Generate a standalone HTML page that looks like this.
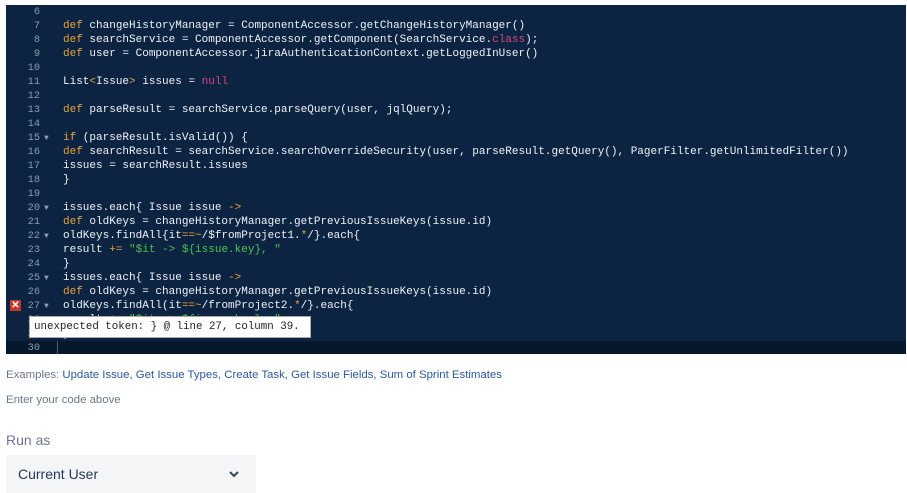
<!DOCTYPE html>
<html><head><meta charset="utf-8"><style>
body{margin:0;width:907px;height:493px;background:#fff;font-family:"Liberation Sans",sans-serif;overflow:hidden;position:relative}
.ed{position:absolute;left:6px;top:5px;width:900px;height:349px;background:#0c2441;font-family:"Liberation Mono",monospace;font-size:11px;color:#eef2f7}
.ln{position:absolute;left:0;height:14px;line-height:14px;width:900px;white-space:pre}
.g{display:inline-block;width:34px;text-align:right;color:#8b9bb0;padding-right:23px;font-size:10.3px}
.k{color:#e8a23a}.n{color:#d64783}.s{color:#4cc24c}.o{color:#e8a23a}
.ar{position:absolute;color:#8b9bb0;font-size:8px}
.act{position:absolute;left:0;top:336px;width:900px;height:13px;background:#06182c}
.tip{position:absolute;left:29px;top:316px;width:282px;height:22px;background:#fff;border:1px solid #aaa;font-family:"Liberation Mono",monospace;font-size:10.8px;line-height:21px;color:#222;padding-left:4px;box-sizing:border-box}
.x{position:absolute;left:4px;top:295px;width:11px;height:11px;background:#c0392b;color:#fff;font-size:10px;line-height:11px;text-align:center;font-family:"Liberation Sans";font-weight:bold}
</style></head><body>
<div class="ed">
<div class="act"></div>
<div class="ln" style="top:0"><span class="g">6</span></div>
<div class="ln" style="top:14px"><span class="g">7</span><span class="k">def</span> changeHistoryManager = ComponentAccessor.getChangeHistoryManager()</div>
<div class="ln" style="top:28px"><span class="g">8</span><span class="k">def</span> searchService = ComponentAccessor.getComponent(SearchService.<span class="n">class</span>);</div>
<div class="ln" style="top:42px"><span class="g">9</span><span class="k">def</span> user = ComponentAccessor.jiraAuthenticationContext.getLoggedInUser()</div>
<div class="ln" style="top:56px"><span class="g">10</span></div>
<div class="ln" style="top:70px"><span class="g">11</span>List<span class="o">&lt;</span>Issue<span class="o">&gt;</span> issues = <span class="n">null</span></div>
<div class="ln" style="top:84px"><span class="g">12</span></div>
<div class="ln" style="top:98px"><span class="g">13</span><span class="k">def</span> parseResult = searchService.parseQuery(user, jqlQuery);</div>
<div class="ln" style="top:112px"><span class="g">14</span></div>
<div class="ln" style="top:126px"><span class="g">15</span><span class="k">if</span> (parseResult.isValid()) {</div>
<div class="ln" style="top:140px"><span class="g">16</span><span class="k">def</span> searchResult = searchService.searchOverrideSecurity(user, parseResult.getQuery(), PagerFilter.getUnlimitedFilter())</div>
<div class="ln" style="top:154px"><span class="g">17</span>issues = searchResult.issues</div>
<div class="ln" style="top:168px"><span class="g">18</span>}</div>
<div class="ln" style="top:182px"><span class="g">19</span></div>
<div class="ln" style="top:196px"><span class="g">20</span>issues.each{ Issue issue <span class="o">-&gt;</span></div>
<div class="ln" style="top:210px"><span class="g">21</span><span class="k">def</span> oldKeys = changeHistoryManager.getPreviousIssueKeys(issue.id)</div>
<div class="ln" style="top:224px"><span class="g">22</span>oldKeys.findAll{it<span class="o">==~</span>/$fromProject1.<span class="o">*</span>/}.each{</div>
<div class="ln" style="top:238px"><span class="g">23</span>result <span class="o">+=</span> <span class="s">"$it -&gt; ${issue.key}, "</span></div>
<div class="ln" style="top:252px"><span class="g">24</span>}</div>
<div class="ln" style="top:266px"><span class="g">25</span>issues.each{ Issue issue <span class="o">-&gt;</span></div>
<div class="ln" style="top:280px"><span class="g">26</span><span class="k">def</span> oldKeys = changeHistoryManager.getPreviousIssueKeys(issue.id)</div>
<div class="ln" style="top:294px"><span class="g">27</span>oldKeys.findAll(it<span class="o">==~</span>/fromProject2.<span class="o">*</span>/}.each{</div>
<div class="ln" style="top:308px"><span class="g">28</span>result <span class="o">+=</span> <span class="s">"$it -&gt; ${issue.key}, "</span></div>
<div class="ln" style="top:322px"><span class="g">29</span>}</div>
<div class="ln" style="top:336px"><span class="g">30</span><span style="display:inline-block;width:1px;height:13px;background:#4a6080;vertical-align:middle;margin-left:-6px"></span></div>
<span class="ar" style="left:38px;top:129px">▼</span>
<span class="ar" style="left:38px;top:199px">▼</span>
<span class="ar" style="left:38px;top:227px">▼</span>
<span class="ar" style="left:38px;top:269px">▼</span>
<span class="ar" style="left:38px;top:297px">▼</span>
<div class="x">✕</div>
</div>
<div class="tip">unexpected token: } @ line 27, column 39.</div>
<div style="position:absolute;left:6px;top:369px;font-size:11.4px;color:#6b778c">Examples: <span style="color:#2a5a9a">Update Issue, Get Issue Types, Create Task, Get Issue Fields, Sum of Sprint Estimates</span></div>
<div style="position:absolute;left:6px;top:394px;font-size:11.4px;color:#6b778c">Enter your code above</div>
<div style="position:absolute;left:6px;top:432px;font-size:14px;color:#6b778c">Run as</div>
<div style="position:absolute;left:6px;top:455px;width:250px;height:38px;background:#f4f5f7"></div>
<div style="position:absolute;left:18px;top:466px;font-size:14px;color:#253858">Current User</div>
<svg style="position:absolute;left:228px;top:469px" width="12" height="10" viewBox="0 0 12 10"><path d="M2 3l4 4 4-4" stroke="#344563" stroke-width="2" fill="none"/></svg>
</body></html>
